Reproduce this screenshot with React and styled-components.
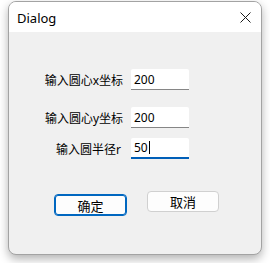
import styled, { createGlobalStyle } from "styled-components";

const Global = createGlobalStyle`
  html, body { margin: 0; padding: 0; background: #ffffff; }
  body {
    font-family: "Noto Sans", "Noto Sans CJK SC", sans-serif;
    width: 270px;
    height: 263px;
    overflow: hidden;
  }
`;

const Window = styled.div`
  margin: 1px 0 0 8px;
  width: 254px;
  height: 254px;
  box-sizing: border-box;
  border: 1px solid #a3a3a3;
  border-radius: 8px;
  overflow: hidden;
  background: #f0f0f0;
  box-shadow: 0 4px 10px rgba(0, 0, 0, 0.3);
  display: flex;
  flex-direction: column;
`;

const TitleBar = styled.div`
  height: 30px;
  background: #ffffff;
  display: flex;
  align-items: center;
  justify-content: space-between;
  padding: 0 9px 0 8px;
  flex-shrink: 0;
`;

const Title = styled.span`
  font-size: 13px;
  color: #000;
  margin-top: 1px;
`;

const CloseIcon = styled.svg`
  width: 11px;
  height: 11px;
  margin-right: 1px;
`;

const Body = styled.div`
  flex: 1;
  display: flex;
  flex-direction: column;
  padding-top: 37px;
`;

const Row = styled.div`
  display: flex;
  align-items: center;
  margin-top: ${({ $mt }) => $mt || 0}px;
  height: 21px;
`;

const Label = styled.span`
  width: ${({ $w }) => $w}px;
  text-align: right;
  font-size: 12px;
  color: #000;
  white-space: nowrap;
  margin-right: ${({ $gap }) => $gap}px;
`;

const Field = styled.div`
  width: 58px;
  height: 21px;
  box-sizing: border-box;
  background: #ffffff;
  border-bottom: ${({ $focus }) => ($focus ? "2px solid #005fb8" : "1px solid #868686")};
  border-radius: 2px 2px 0 0;
  font-size: 12px;
  color: #000;
  display: flex;
  align-items: center;
  padding: 0 0 0 3px;
`;

const Caret = styled.span`
  display: inline-block;
  width: 1px;
  height: 13px;
  background: #000;
  margin-left: 1px;
`;

const Buttons = styled.div`
  display: flex;
  align-items: flex-start;
  margin-top: 32px;
  padding-left: 45px;
  gap: 20px;
`;

const Button = styled.button`
  width: ${({ $w }) => $w}px;
  height: ${({ $h }) => $h}px;
  box-sizing: border-box;
  margin-top: ${({ $mt }) => $mt || 0}px;
  background: #fdfdfd;
  border: 1px solid ${({ $primary }) => ($primary ? "#0067c0" : "#d0d0d0")};
  box-shadow: ${({ $primary }) => ($primary ? "inset 0 0 0 1px #0067c0" : "none")};
  border-radius: 4px;
  font-family: "Noto Sans", "Noto Sans CJK SC", sans-serif;
  font-size: 13px;
  color: #000;
  padding: 0;
  display: flex;
  align-items: center;
  justify-content: center;
`;

export default function App() {
  return (
    <>
      <Global />
      <Window>
        <TitleBar>
          <Title>Dialog</Title>
          <CloseIcon viewBox="0 0 11 11">
            <path d="M0.5 0.5 L10.5 10.5 M10.5 0.5 L0.5 10.5" stroke="#1a1a1a" strokeWidth="1" fill="none" />
          </CloseIcon>
        </TitleBar>
        <Body>
          <Row>
            <Label $w={114} $gap={8}>输入圆心x坐标</Label>
            <Field>200</Field>
          </Row>
          <Row $mt={17}>
            <Label $w={114} $gap={8}>输入圆心y坐标</Label>
            <Field>200</Field>
          </Row>
          <Row $mt={10}>
            <Label $w={112} $gap={10}>输入圆半径r</Label>
            <Field $focus>
              50<Caret />
            </Field>
          </Row>
          <Buttons>
            <Button $primary $w={73} $h={22} $mt={3}>确定</Button>
            <Button $w={72} $h={21}>取消</Button>
          </Buttons>
        </Body>
      </Window>
    </>
  );
}
